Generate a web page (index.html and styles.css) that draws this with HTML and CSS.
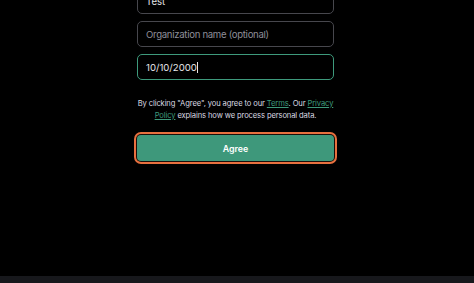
FILE: index.html
```html
<!DOCTYPE html>
<html lang="en">
<head>
<meta charset="utf-8">
<title>Agree</title>
<link rel="stylesheet" href="styles.css">
</head>
<body>
<div class="page">
  <main class="main">
    <form class="form">
      <div class="field"><span class="value">Test</span></div>
      <div class="field"><span class="placeholder">Organization name (optional)</span></div>
      <div class="field field-active"><span class="value">10/10/2000</span><span class="caret"></span></div>
      <p class="legal">By clicking "Agree", you agree to our <a href="#">Terms</a>. Our <a href="#">Privacy Policy</a> explains how we process personal data.</p>
      <button type="button" class="agree">Agree</button>
    </form>
  </main>
  <div class="bottom-bar"></div>
</div>
</body>
</html>
```

FILE: styles.css
```css
* { box-sizing: border-box; }
html, body {
  margin: 0;
  padding: 0;
  background: #000;
  height: 100%;
  overflow: hidden;
}
body {
  font-family: Inter, "Noto Sans", "Liberation Sans", sans-serif;
  color: #ececf1;
}
.page {
  height: 283px;
  display: flex;
  flex-direction: column;
}
.main {
  flex: 1;
  display: flex;
  justify-content: center;
  padding-right: 3px;
}
.form {
  width: 197px;
  margin-top: -12px;
  display: flex;
  flex-direction: column;
}
.field {
  height: 26px;
  border: 1px solid #47474d;
  border-radius: 5px;
  display: flex;
  align-items: center;
  padding: 0 8px;
  font-size: 9.6px;
  margin-bottom: 7px;
}
.field-active {
  border-color: #3e9a7c;
  margin-bottom: 0;
}
.value { color: #e6e6ea; }
.placeholder {
  color: #8e8e99;
  letter-spacing: -0.3px;
}
.caret {
  width: 1px;
  height: 11px;
  background: #e6e6ea;
  margin-left: 0.5px;
}
.legal {
  margin: 18px -2px 0;
  text-align: center;
  font-size: 7.6px;
  letter-spacing: -0.12px;
  line-height: 12px;
  color: #d9d9e0;
}
.legal a {
  color: #3e9a7c;
  text-decoration: underline;
}
.agree {
  margin-top: 13px;
  height: 26px;
  width: 100%;
  border: none;
  border-radius: 4px;
  background: #3e987b;
  color: #fff;
  font-family: inherit;
  font-size: 8.8px;
  font-weight: 600;
  box-shadow: 0 0 0 1px #1a0f0a, 0 0 0 3px #e8703f;
}
.bottom-bar {
  height: 7px;
  background: #17181c;
}
```
